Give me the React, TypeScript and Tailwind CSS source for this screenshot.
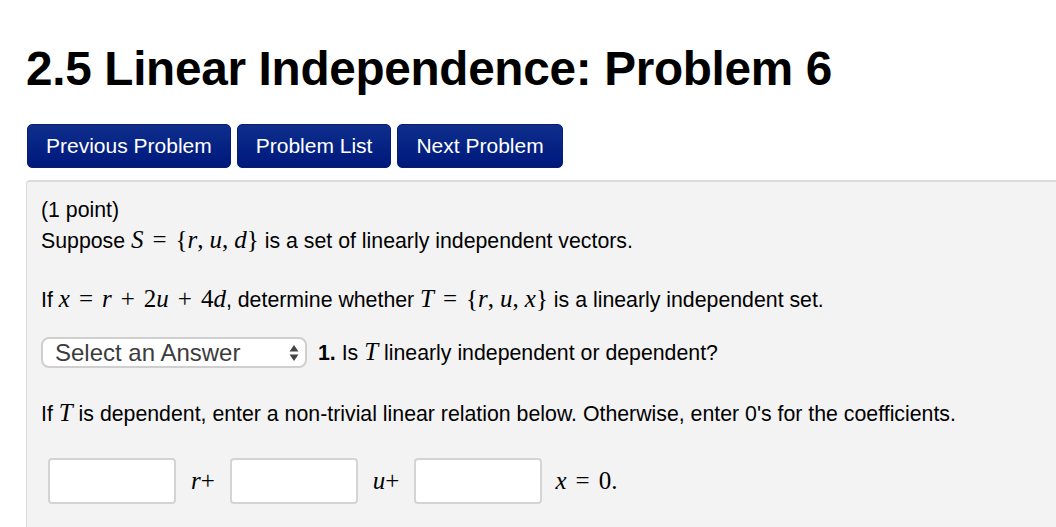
/** WeBWorK problem page: 2.5 Linear Independence, Problem 6 */

function V({ children }: { children: React.ReactNode }) {
  // 수식 변수 (이탤릭 세리프)
  return (
    <span className="font-['Liberation_Serif',serif] text-[25px] italic">{children}</span>
  );
}

function M({ children }: { children: React.ReactNode }) {
  // 수식 숫자/괄호 (업라이트 세리프)
  return <span className="font-['Liberation_Serif',serif] text-[25px]">{children}</span>;
}

function Rel({ children }: { children: React.ReactNode }) {
  // 관계 기호 (=), 넓은 간격
  return (
    <span className="mx-[9px] font-['Liberation_Serif',serif] text-[25px]">{children}</span>
  );
}

function Bin({ children }: { children: React.ReactNode }) {
  return (
    <span className="mx-[9px] font-['Liberation_Serif',serif] text-[25px]">{children}</span>
  );
}

function Comma() {
  return <span className="mr-[6px] font-['Liberation_Serif',serif] text-[25px]">,</span>;
}

function NavButton({ label }: { label: string }) {
  return (
    <button className="h-[44px] rounded-[5px] border border-[#0a1d6e] bg-gradient-to-b from-[#0f2e8c] to-[#00177c] px-[18px] text-[21px] text-white">
      {label}
    </button>
  );
}

function CoefInput() {
  return (
    <input
      type="text"
      className="h-[46px] w-[128px] rounded-[4px] border-2 border-[#d4d4d4] bg-white"
    />
  );
}

export default function App() {
  return (
    <div className="min-h-[527px] overflow-hidden bg-white font-['Liberation_Sans',Arial,sans-serif] text-black">
      {/* 제목 */}
      <h1 className="pl-[26px] pt-[42px] text-[47.7px] font-bold leading-[54px] tracking-[-0.3px]">
        2.5 Linear Independence: Problem 6
      </h1>

      {/* 이동 버튼 */}
      <div className="mt-[28px] flex gap-[6px] pl-[27px]">
        <NavButton label="Previous Problem" />
        <NavButton label="Problem List" />
        <NavButton label="Next Problem" />
      </div>

      {/* 문제 패널 */}
      <div className="ml-[26px] mt-[12px] min-h-[360px] rounded-tl-[4px] border-l border-t-2 border-[#dcdcdc] bg-[#f3f3f3] pl-[14px] pt-[13px] text-[21.3px] leading-[30px]">
        <div>(1 point)</div>
        <div>
          Suppose <V>S</V>
          <Rel>=</Rel>
          <M>{'{'}</M>
          <V>r</V>
          <Comma />
          <V>u</V>
          <Comma />
          <V>d</V>
          <M>{'}'}</M> is a set of linearly independent vectors.
        </div>

        <div className="mt-[28px]">
          If <V>x</V>
          <Rel>=</Rel>
          <V>r</V>
          <Bin>+</Bin>
          <M>2</M>
          <V>u</V>
          <Bin>+</Bin>
          <M>4</M>
          <V>d</V>, determine whether <V>T</V>
          <Rel>=</Rel>
          <M>{'{'}</M>
          <V>r</V>
          <Comma />
          <V>u</V>
          <Comma />
          <V>x</V>
          <M>{'}'}</M> is a linearly independent set.
        </div>

        <div className="mt-[22px] flex items-center gap-[11px]">
          <div className="flex h-[31px] w-[266px] items-center justify-between rounded-[8px] border-2 border-[#cfcfcf] bg-white pl-[12px] pr-[6px] text-[24px] text-[#3c3c3c]">
            <span>Select an Answer</span>
            <svg width="10" height="18" viewBox="0 0 10 18">
              <path d="M5 1 L9.5 7.5 L0.5 7.5 Z" fill="#444" />
              <path d="M5 17 L9.5 10.5 L0.5 10.5 Z" fill="#444" />
            </svg>
          </div>
          <div>
            <b>1.</b> Is <V>T</V> linearly independent or dependent?
          </div>
        </div>

        <div className="mt-[30px]">
          If <V>T</V> is dependent, enter a non-trivial linear relation below. Otherwise, enter 0's for the
          coefficients.
        </div>

        <div className="mt-[29px] flex items-center pl-[7px]">
          <CoefInput />
          <span className="mx-[15px]">
            <V>r</V>
            <M>+</M>
          </span>
          <CoefInput />
          <span className="mx-[15px]">
            <V>u</V>
            <M>+</M>
          </span>
          <CoefInput />
          <span className="ml-[13px]">
            <V>x</V>
            <Rel>=</Rel>
            <M>0.</M>
          </span>
        </div>
      </div>
    </div>
  );
}
